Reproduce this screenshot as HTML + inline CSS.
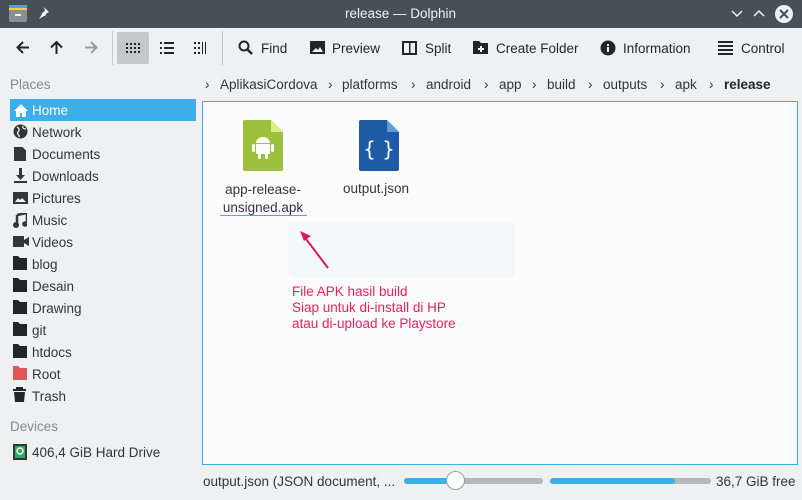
<!DOCTYPE html>
<html><head><meta charset="utf-8"><style>
*{margin:0;padding:0;box-sizing:border-box}
body{width:802px;height:500px;background:#eff0f1;font-family:"Liberation Sans","DejaVu Sans",sans-serif;font-size:13.5px;color:#31363b;position:relative;overflow:hidden}
.a{position:absolute;white-space:nowrap}
.title{left:0;top:0;width:802px;height:28px;background:#475057;color:#eff0f1;font-size:13.5px}
.tb{font-size:13.5px;color:#232629}
.side{font-size:13.5px;color:#31363b}
.ic{position:absolute;width:14px;height:14px;background:#31363b}
.bc{top:77px;color:#31363b}
</style></head><body>
<div class="a title">
 <div class="a" style="left:9px;top:5px;width:18px;height:17px;background:#8a8f94;border-radius:2px"></div>
 <div class="a" style="left:9px;top:5px;width:18px;height:3px;background:#5b9bd5"></div>
 <div class="a" style="left:9px;top:8px;width:18px;height:2px;background:#f2c94c"></div>
 <div class="a" style="left:15px;top:14px;width:6px;height:2px;background:#eee"></div>
 <svg class="a" style="left:37px;top:7px" width="12" height="12"><path d="M7 0l5 5-2 1-2 3-1 0-5 3 3-5 0-1 3-2z" fill="#eff0f1"/></svg>
 <div class="a" style="left:345px;top:6px">release — Dolphin</div>
 <svg class="a" style="left:731px;top:10px" width="12" height="8"><path d="M1 1l5 5 5-5" stroke="#eff0f1" stroke-width="1.5" fill="none"/></svg>
 <svg class="a" style="left:753px;top:9px" width="12" height="8"><path d="M1 7l5-5 5 5" stroke="#eff0f1" stroke-width="1.5" fill="none"/></svg>
 <svg class="a" style="left:775px;top:5px" width="18" height="18"><circle cx="9" cy="9" r="9" fill="#eff0f1"/><path d="M5 5l8 8M13 5l-8 8" stroke="#475057" stroke-width="2"/></svg>
</div>
<!-- toolbar -->
<svg class="a" style="left:16px;top:41px" width="14" height="13"><path d="M13 6.5H2M7 1L1.5 6.5 7 12" stroke="#232629" stroke-width="2" fill="none"/></svg>
<svg class="a" style="left:50px;top:40px" width="13" height="14"><path d="M6.5 14V2M1 7.5L6.5 2 12 7.5" stroke="#232629" stroke-width="2" fill="none"/></svg>
<svg class="a" style="left:84px;top:41px" width="14" height="13"><path d="M1 6.5h11M7 1l5.5 5.5L7 12" stroke="#9a9ea2" stroke-width="2" fill="none"/></svg>
<div class="a" style="left:112px;top:31px;width:1px;height:34px;background:#c5c8cb"></div>
<div class="a" style="left:117px;top:32px;width:32px;height:32px;background:#c5c8cb;border-radius:2px"></div>
<svg class="a" style="left:126px;top:43px" width="14" height="10"><g fill="#232629"><rect x="0" y="0" width="2" height="2"/><rect x="4" y="0" width="2" height="2"/><rect x="8" y="0" width="2" height="2"/><rect x="12" y="0" width="2" height="2"/><rect x="0" y="4" width="2" height="2"/><rect x="4" y="4" width="2" height="2"/><rect x="8" y="4" width="2" height="2"/><rect x="12" y="4" width="2" height="2"/><rect x="0" y="8" width="2" height="2"/><rect x="4" y="8" width="2" height="2"/><rect x="8" y="8" width="2" height="2"/><rect x="12" y="8" width="2" height="2"/></g></svg>
<svg class="a" style="left:160px;top:42px" width="14" height="12"><g fill="#232629"><rect x="0" y="0" width="2" height="2"/><rect x="4" y="0" width="10" height="2"/><rect x="0" y="5" width="2" height="2"/><rect x="4" y="5" width="10" height="2"/><rect x="0" y="10" width="2" height="2"/><rect x="4" y="10" width="10" height="2"/></g></svg>
<svg class="a" style="left:194px;top:42px" width="13" height="12"><g fill="#232629"><rect x="0" y="0" width="2" height="2"/><rect x="4" y="0" width="2" height="2"/><rect x="0" y="5" width="2" height="2"/><rect x="4" y="5" width="2" height="2"/><rect x="0" y="10" width="2" height="2"/><rect x="4" y="10" width="2" height="2"/><rect x="8" y="0" width="1" height="12"/><rect x="11" y="0" width="1" height="12"/></g></svg>
<div class="a" style="left:222px;top:31px;width:1px;height:34px;background:#c5c8cb"></div>
<svg class="a" style="left:238px;top:40px" width="16" height="16"><circle cx="6" cy="6" r="4.5" fill="none" stroke="#232629" stroke-width="2"/><path d="M9 9l5 5" stroke="#232629" stroke-width="2.5"/></svg>
<div class="a tb" style="left:261px;top:41px">Find</div>
<svg class="a" style="left:310px;top:41px" width="15" height="13"><rect width="15" height="13" fill="#232629"/><path d="M2 11l4-4 2 2 2-3 3 5z" fill="#eff0f1"/></svg>
<div class="a tb" style="left:332px;top:41px">Preview</div>
<svg class="a" style="left:402px;top:41px" width="15" height="14"><rect x="1" y="1" width="13" height="12" fill="none" stroke="#232629" stroke-width="2"/><rect x="7" y="1" width="1.5" height="12" fill="#232629"/></svg>
<div class="a tb" style="left:425px;top:41px">Split</div>
<svg class="a" style="left:473px;top:41px" width="15" height="13"><path d="M0 0h6l2 2h7v11H0z" fill="#232629"/><path d="M7 5h2v2h2v2H9v2H7V9H5V7h2z" fill="#eff0f1"/></svg>
<div class="a tb" style="left:496px;top:41px">Create Folder</div>
<svg class="a" style="left:600px;top:40px" width="16" height="16"><circle cx="8" cy="8" r="7.5" fill="#232629"/><rect x="7" y="7" width="2" height="5" fill="#eff0f1"/><rect x="7" y="4" width="2" height="2" fill="#eff0f1"/></svg>
<div class="a tb" style="left:623px;top:41px">Information</div>
<svg class="a" style="left:718px;top:41px" width="15" height="14"><g fill="#232629"><rect y="0" width="15" height="2"/><rect y="4" width="15" height="2"/><rect y="8" width="15" height="2"/><rect y="12" width="15" height="2"/></g></svg>
<div class="a tb" style="left:741px;top:41px">Control</div>
<!-- breadcrumbs -->
<div class="a" style="left:10px;top:77px;color:#7f8c8d">Places</div>
<div class="a bc" style="left:205px">›</div><div class="a bc" style="left:220px">AplikasiCordova</div>
<div class="a bc" style="left:328px">›</div><div class="a bc" style="left:342px">platforms</div>
<div class="a bc" style="left:411px">›</div><div class="a bc" style="left:426px">android</div>
<div class="a bc" style="left:484px">›</div><div class="a bc" style="left:499px">app</div>
<div class="a bc" style="left:532px">›</div><div class="a bc" style="left:547px">build</div>
<div class="a bc" style="left:588px">›</div><div class="a bc" style="left:603px">outputs</div>
<div class="a bc" style="left:660px">›</div><div class="a bc" style="left:675px">apk</div>
<div class="a bc" style="left:709px">›</div><div class="a bc" style="left:724px;font-weight:bold;color:#232629">release</div>
<!-- sidebar -->
<div class="a" style="left:10px;top:99px;width:186px;height:22px;background:#3daee9"></div>
<svg class="a" style="left:14px;top:103px" width="14" height="14"><path d="M7 1L0 8h2v6h4v-4h2v4h4V8h2z" fill="#fcfcfc"/></svg>
<div class="a side" style="left:32px;top:103px;color:#fcfcfc">Home</div>
<svg class="a" style="left:13px;top:124px" width="15" height="15"><circle cx="7.5" cy="7.5" r="7" fill="#31363b"/><path d="M4 3c2 1 3 3 1 5s2 3 1 5M10 2c-1 2 1 3 3 3" stroke="#eff0f1" stroke-width="1.3" fill="none"/></svg>
<div class="a side" style="left:32px;top:125px">Network</div>
<div class="ic" style="left:14px;top:147px;width:12px;clip-path:polygon(0 0,70% 0,100% 25%,100% 100%,0 100%)"></div>
<div class="a side" style="left:32px;top:147px">Documents</div>
<svg class="a" style="left:14px;top:168px" width="13" height="15"><path d="M5 0h3v7h3l-4.5 5L2 7h3z M0 13h13v2H0z" fill="#31363b"/></svg>
<div class="a side" style="left:32px;top:169px">Downloads</div>
<svg class="a" style="left:13px;top:192px" width="15" height="12"><rect width="15" height="12" fill="#31363b"/><path d="M2 10l3-4 2 2 2-2 4 4z" fill="#eff0f1"/></svg>
<div class="a side" style="left:32px;top:191px">Pictures</div>
<svg class="a" style="left:13px;top:213px" width="14" height="15"><path d="M4 2l10-2v11" stroke="#31363b" stroke-width="2.5" fill="none"/><path d="M4 2v10" stroke="#31363b" stroke-width="2.5"/><circle cx="3" cy="12" r="3" fill="#31363b"/><circle cx="12" cy="11" r="2.8" fill="#31363b"/></svg>
<div class="a side" style="left:32px;top:213px">Music</div>
<svg class="a" style="left:13px;top:236px" width="16" height="11"><rect width="11" height="11" fill="#31363b"/><path d="M11 4l5-3v9l-5-3z" fill="#31363b"/></svg>
<div class="a side" style="left:32px;top:235px">Videos</div>
<svg width="0" height="0" style="position:absolute"><defs><path id="fd" d="M0 0h5l2 2h7v12H0z"/></defs></svg>
<svg class="a" style="left:13px;top:256px" width="14" height="14"><use href="#fd" fill="#232629"/></svg><div class="a side" style="left:32px;top:257px">blog</div>
<svg class="a" style="left:13px;top:278px" width="14" height="14"><use href="#fd" fill="#232629"/></svg><div class="a side" style="left:32px;top:279px">Desain</div>
<svg class="a" style="left:13px;top:300px" width="14" height="14"><use href="#fd" fill="#232629"/></svg><div class="a side" style="left:32px;top:301px">Drawing</div>
<svg class="a" style="left:13px;top:322px" width="14" height="14"><use href="#fd" fill="#232629"/></svg><div class="a side" style="left:32px;top:323px">git</div>
<svg class="a" style="left:13px;top:344px" width="14" height="14"><use href="#fd" fill="#232629"/></svg><div class="a side" style="left:32px;top:345px">htdocs</div>
<svg class="a" style="left:13px;top:366px" width="14" height="14"><use href="#fd" fill="#e15656"/></svg><div class="a side" style="left:32px;top:367px">Root</div>
<svg class="a" style="left:13px;top:387px" width="13" height="15"><rect x="3" y="0" width="7" height="2" fill="#232629"/><rect x="0" y="2" width="13" height="2" fill="#232629"/><path d="M1 5h11l-1 10H2z" fill="#232629"/></svg>
<div class="a side" style="left:32px;top:389px">Trash</div>
<div class="a" style="left:10px;top:419px;color:#7f8c8d">Devices</div>
<svg class="a" style="left:13px;top:444px" width="14" height="16"><rect width="14" height="16" fill="#31363b"/><rect x="2" y="2" width="10" height="12" fill="#27ae60"/><circle cx="7" cy="7" r="3" fill="none" stroke="#fff" stroke-width="1.5"/></svg>
<div class="a side" style="left:32px;top:445px">406,4 GiB Hard Drive</div>
<!-- main view -->
<div class="a" style="left:202px;top:101px;width:596px;height:364px;background:#fcfcfc;border:1px solid #3daee9"></div>
<div class="a" style="left:288px;top:222px;width:227px;height:56px;background:#f4f8fa;border-radius:6px"></div>
<svg class="a" style="left:243px;top:120px" width="40" height="51"><path d="M2 0h26l12 12v37a2 2 0 0 1-2 2H2a2 2 0 0 1-2-2V2a2 2 0 0 1 2-2z" fill="#9dc13e"/><path d="M28 0l12 12H28z" fill="#d7ef7d"/><g fill="#fcfcfc"><path d="M13 23a7 6 0 0 1 14 0z"/><rect x="13" y="24" width="14" height="10" rx="1"/><rect x="9" y="24" width="3" height="8" rx="1.5"/><rect x="28" y="24" width="3" height="8" rx="1.5"/><rect x="15" y="33" width="3" height="6" rx="1.5"/><rect x="22" y="33" width="3" height="6" rx="1.5"/></g></svg>
<svg class="a" style="left:359px;top:120px" width="40" height="51"><path d="M2 0h26l12 12v37a2 2 0 0 1-2 2H2a2 2 0 0 1-2-2V2a2 2 0 0 1 2-2z" fill="#1f5aa6"/><path d="M28 0l12 12H28z" fill="#5c9bd8"/><text x="20" y="36" text-anchor="middle" font-family="DejaVu Sans,sans-serif" font-size="20" fill="#fcfcfc">{ }</text></svg>
<div class="a" style="left:202px;top:181px;width:122px;text-align:center;line-height:18px">app-release-<br>unsigned.apk</div>
<div class="a" style="left:220px;top:215px;width:87px;height:1px;background:#3daee9"></div>
<div class="a" style="left:343px;top:181px">output.json</div>
<svg class="a" style="left:298px;top:230px" width="35" height="42"><path d="M30 38L5 5" stroke="#d81b60" stroke-width="2"/><path d="M2 1l11 5-7 5z" fill="#d81b60"/></svg>
<div class="a" style="left:292px;top:284px;color:#e91e63;line-height:16px">File APK hasil build<br>Siap untuk di-install di HP<br>atau di-upload ke Playstore</div>
<!-- status bar -->
<div class="a" style="left:203px;top:474px">output.json (JSON document, ...</div>
<div class="a" style="left:404px;top:478px;width:139px;height:6px;background:#b5b7b9;border-radius:3px"></div>
<div class="a" style="left:404px;top:478px;width:50px;height:6px;background:#3daee9;border-radius:3px"></div>
<div class="a" style="left:446px;top:471px;width:19px;height:19px;border-radius:50%;background:#fcfcfc;border:1px solid #9a9ea2"></div>
<div class="a" style="left:550px;top:478px;width:161px;height:6px;background:#b5b7b9;border-radius:3px"></div>
<div class="a" style="left:550px;top:478px;width:125px;height:6px;background:#3daee9;border-radius:3px"></div>
<div class="a" style="left:716px;top:474px">36,7 GiB free</div>
</body></html>
